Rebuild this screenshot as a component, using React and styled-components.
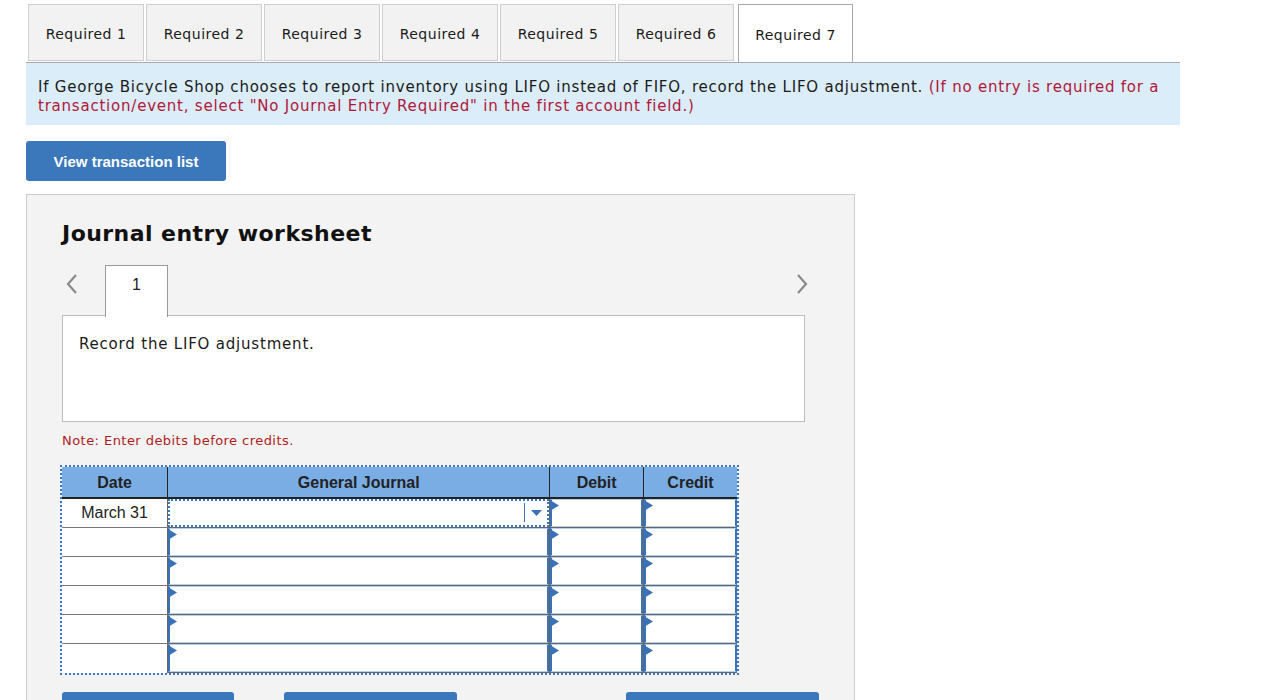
import React from 'react';
import styled, { createGlobalStyle } from 'styled-components';

const GlobalStyle = createGlobalStyle`
    body {
        margin: 0;
        background: #fff;
        font-family: Verdana, "DejaVu Sans", sans-serif;
        color: #222;
    }
`;

const tabs = [
    'Required 1',
    'Required 2',
    'Required 3',
    'Required 4',
    'Required 5',
    'Required 6',
    'Required 7',
];

const Flag = () => (
    <svg className="flag" width="9" height="11" viewBox="0 0 9 11">
        <path d="M0 0 L9 5.5 L0 11 Z" fill="#3a72b8" />
    </svg>
);

const App = () => {
    const rows = [0, 1, 2, 3, 4, 5];
    return (
        <>
            <GlobalStyle />
            <Page>
                <TabBar>
                    {tabs.map((t, i) => (
                        <Tab key={t} active={i === tabs.length - 1}>
                            {t}
                        </Tab>
                    ))}
                </TabBar>
                <Instruction>
                    If George Bicycle Shop chooses to report inventory using
                    LIFO instead of FIFO, record the LIFO adjustment.{' '}
                    <span className="hint">
                        (If no entry is required for a transaction/event,
                        select "No Journal Entry Required" in the first account
                        field.)
                    </span>
                </Instruction>
                <BlueButton width="200px">View transaction list</BlueButton>

                <Worksheet>
                    <Title>Journal entry worksheet</Title>
                    <NavRow>
                        <Arrow>
                            <svg width="14" height="22" viewBox="0 0 14 22">
                                <path
                                    d="M11 2 L3 11 L11 20"
                                    fill="none"
                                    stroke="#8a8a8a"
                                    strokeWidth="2.2"
                                />
                            </svg>
                        </Arrow>
                        <EntryTab>1</EntryTab>
                        <Spacer />
                        <Arrow>
                            <svg width="14" height="22" viewBox="0 0 14 22">
                                <path
                                    d="M3 2 L11 11 L3 20"
                                    fill="none"
                                    stroke="#8a8a8a"
                                    strokeWidth="2.2"
                                />
                            </svg>
                        </Arrow>
                    </NavRow>
                    <Description>Record the LIFO adjustment.</Description>
                    <Note>Note: Enter debits before credits.</Note>

                    <TableWrap>
                        <Journal>
                            <thead>
                                <tr>
                                    <th style={{ width: 105 }}>Date</th>
                                    <th style={{ width: 380 }}>
                                        General Journal
                                    </th>
                                    <th style={{ width: 93 }}>Debit</th>
                                    <th style={{ width: 93 }}>Credit</th>
                                </tr>
                            </thead>
                            <tbody>
                                {rows.map((r) => (
                                    <tr key={r}>
                                        <DateCell>
                                            {r === 0 ? 'March 31' : ''}
                                        </DateCell>
                                        {r === 0 ? (
                                            <InputCell>
                                                <Focused>
                                                    <div className="drop">
                                                        <svg
                                                            width="11"
                                                            height="6"
                                                            viewBox="0 0 11 6"
                                                        >
                                                            <path
                                                                d="M0 0 L11 0 L5.5 6 Z"
                                                                fill="#3a72b8"
                                                            />
                                                        </svg>
                                                    </div>
                                                </Focused>
                                            </InputCell>
                                        ) : (
                                            <InputCell>
                                                <Field>
                                                    <Flag />
                                                </Field>
                                            </InputCell>
                                        )}
                                        <InputCell>
                                            <Field>
                                                <Flag />
                                            </Field>
                                        </InputCell>
                                        <InputCell>
                                            <Field>
                                                <Flag />
                                            </Field>
                                        </InputCell>
                                    </tr>
                                ))}
                            </tbody>
                        </Journal>
                    </TableWrap>

                    <ActionRow>
                        <BlueButton width="172px">Record entry</BlueButton>
                        <BlueButton width="173px">Clear entry</BlueButton>
                        <Spacer />
                        <BlueButton width="193px">View general journal</BlueButton>
                    </ActionRow>
                </Worksheet>
            </Page>
        </>
    );
};

const Page = styled.div`
    padding: 4px 0 0 26px;
    width: 1154px;
`;

const TabBar = styled.div`
    display: flex;
    gap: 2px;
    padding-left: 2px;
    border-bottom: 1px solid #a9a9a9;
    height: 58px;
`;

const Tab = styled.div`
    width: ${(p) => (p.active ? '115px' : '116px')};
    margin-left: ${(p) => (p.active ? '2px' : '0')};
    height: ${(p) => (p.active ? '58px' : '57px')};
    box-sizing: border-box;
    display: flex;
    align-items: center;
    justify-content: center;
    font-size: 14px;
    letter-spacing: 0.5px;
    color: #1a1a1a;
    background: ${(p) => (p.active ? '#fff' : '#f2f2f2')};
    border: 1px solid ${(p) => (p.active ? '#a9a9a9' : '#cfcfcf')};
    border-bottom: ${(p) => (p.active ? 'none' : '1px solid #cfcfcf')};
    position: relative;
    z-index: ${(p) => (p.active ? 1 : 0)};
    padding-top: 2px;
`;

const Instruction = styled.div`
    background: #dbedf9;
    padding: 15px 12px 9px;
    font-size: 15px;
    letter-spacing: 0.78px;
    line-height: 19px;
    color: #1a1a1a;
    .hint {
        color: #b0173a;
    }
`;

const BlueButton = styled.div`
    width: ${(p) => p.width};
    height: 40px;
    margin-top: 16px;
    background: #3a77bb;
    border-radius: 3px;
    color: #fff;
    font-family: "Liberation Sans", Arial, sans-serif;
    font-weight: bold;
    font-size: 15px;
    display: flex;
    align-items: center;
    justify-content: center;
    flex-shrink: 0;
`;

const Worksheet = styled.div`
    margin-top: 13px;
    width: 829px;
    box-sizing: border-box;
    background: #f3f3f3;
    border: 1px solid #cdcdcd;
    padding: 24px 49px 0 35px;
    height: 520px;
`;

const Title = styled.h2`
    margin: 0;
    font-size: 22px;
    letter-spacing: 0.45px;
    font-weight: bold;
    color: #111;
    line-height: 30px;
`;

const NavRow = styled.div`
    display: flex;
    align-items: flex-start;
    margin-top: 16px;
    height: 51px;
`;

const Arrow = styled.div`
    width: 43px;
    height: 38px;
    display: flex;
    align-items: center;
    padding-left: 3px;
    box-sizing: border-box;
    &:last-child {
        width: 24px;
        margin-right: -14px;
        padding-left: 0;
    }
`;

const Spacer = styled.div`
    flex: 1;
`;

const EntryTab = styled.div`
    width: 63px;
    height: 52px;
    box-sizing: border-box;
    background: #fff;
    border: 1px solid #9a9a9a;
    border-bottom: none;
    display: flex;
    justify-content: center;
    padding-top: 10px;
    font-family: "Liberation Sans", Arial, sans-serif;
    font-size: 16px;
    color: #222;
    position: relative;
    z-index: 1;
`;

const Description = styled.div`
    height: 107px;
    margin-top: -1px;
    box-sizing: border-box;
    background: #fff;
    border: 1px solid #bdbdbd;
    padding: 19px 16px;
    font-size: 15px;
    letter-spacing: 0.8px;
    color: #1a1a1a;
`;

const Note = styled.div`
    margin-top: 11px;
    font-size: 13px;
    letter-spacing: 0.45px;
    color: #b01c1c;
`;

const TableWrap = styled.div`
    margin-top: 17px;
    margin-left: -2px;
    width: 679px;
    box-sizing: border-box;
    border: 2px dotted #3a77bb;
`;

const Journal = styled.table`
    border-collapse: collapse;
    table-layout: fixed;
    width: 100%;
    font-family: "Liberation Sans", Arial, sans-serif;
    th {
        height: 31px;
        box-sizing: border-box;
        background: #7aade4;
        color: #222;
        font-size: 16px;
        font-weight: bold;
        border-left: 1px solid #222;
        border-bottom: 2px solid #222;
        padding: 2px 0 0;
    }
    th:first-child {
        border-left: none;
    }
    td {
        height: 29px;
        padding: 0;
        box-sizing: border-box;
    }
`;

const DateCell = styled.td`
    background: #fff;
    border-bottom: 1px solid #777;
    text-align: center;
    font-size: 16px;
    color: #222;
    tr:last-child & {
        border-bottom: none;
    }
`;

const InputCell = styled.td`
    border-left: 1px solid #666;
    border-bottom: 1px solid #666;
    background: #666;
    tr:last-child & {
        border-bottom: none;
    }
`;

const Field = styled.div`
    position: relative;
    height: 28px;
    box-sizing: border-box;
    background: #fff;
    border: 1px solid #b7cfed;
    border-left: 2px solid #3a72b8;
    border-right: 2px solid #3a72b8;
    .flag {
        position: absolute;
        left: -2px;
        top: 0;
    }
`;

const Focused = styled.div`
    height: 28px;
    box-sizing: border-box;
    background: #fff;
    border: 2px dotted #3a77bb;
    display: flex;
    justify-content: flex-end;
    .drop {
        width: 22px;
        margin: 2px 0 3px;
        border-left: 1px solid #3a72b8;
        display: flex;
        align-items: center;
        justify-content: center;
    }
`;

const ActionRow = styled.div`
    display: flex;
    gap: 50px;
    margin-top: 1px;
    width: 757px;
`;

export default App;
